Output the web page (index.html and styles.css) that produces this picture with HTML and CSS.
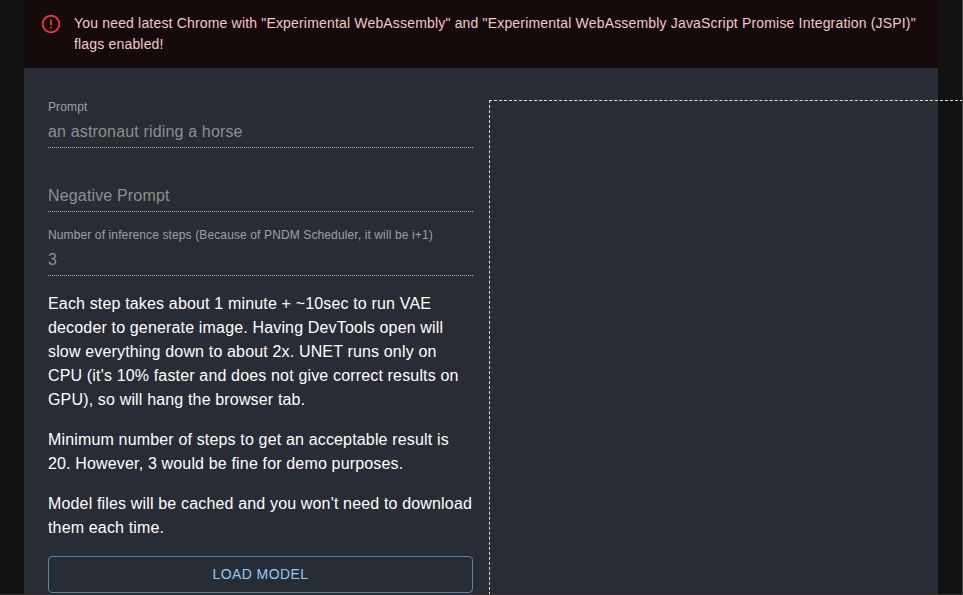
FILE: index.html
```html
<!DOCTYPE html>
<html lang="en">
<head>
    <meta charset="UTF-8">
    <title>Stable Diffusion</title>
    <link rel="stylesheet" href="styles.css">
</head>
<body>
<div class="page">
    <div class="alert">
        <svg class="alert-icon" width="22" height="22" viewBox="0 0 24 24">
            <path fill="#e53935" d="M11 15h2v2h-2zm0-8h2v6h-2zm.99-5C6.47 2 2 6.48 2 12s4.47 10 9.99 10C17.52 22 22 17.52 22 12S17.52 2 11.99 2zM12 20c-4.42 0-8-3.58-8-8s3.58-8 8-8 8 3.58 8 8-3.58 8-8 8z"/>
        </svg>
        <div class="alert-text">You need latest Chrome with "Experimental WebAssembly" and "Experimental WebAssembly JavaScript Promise Integration (JSPI)" flags enabled!</div>
    </div>
    <div class="paper">
        <div class="left">
            <div class="field first">
                <label class="field-label">Prompt</label>
                <div class="field-value">an astronaut riding a horse</div>
            </div>
            <div class="field">
                <label class="field-label"></label>
                <div class="field-value">Negative Prompt</div>
            </div>
            <div class="field">
                <label class="field-label">Number of inference steps (Because of PNDM Scheduler, it will be i+1)</label>
                <div class="field-value">3</div>
            </div>
            <p class="info">Each step takes about 1 minute + ~10sec to run VAE decoder to generate image. Having DevTools open will slow everything down to about 2x. UNET runs only on CPU (it's 10% faster and does not give correct results on GPU), so will hang the browser tab.</p>
            <p class="info">Minimum number of steps to get an acceptable result is 20. However, 3 would be fine for demo purposes.</p>
            <p class="info">Model files will be cached and you won't need to download them each time.</p>
            <button class="load-btn">LOAD MODEL</button>
        </div>
        <div class="right">
            <div class="canvas-box"></div>
        </div>
    </div>
</div>
<div class="edge"></div>
</body>
</html>
```

FILE: styles.css
```css
html, body {
    height: 100%;
}

body {
    margin: 0;
    background: #121212;
    color: #fff;
    font-family: "Liberation Sans", Arial, sans-serif;
    overflow: hidden;
}

.page {
    width: 914px;
    height: 595px;
    margin-left: 24px;
}

.alert {
    display: flex;
    height: 68px;
    box-sizing: border-box;
    padding: 13px 16px 0 16px;
    background: #160b0b;
    color: #f4c7c7;
}

.alert-icon {
    flex: none;
    margin-right: 12px;
}

.alert-text {
    font-size: 14px;
    line-height: 21px;
    letter-spacing: 0.175px;
}

.paper {
    display: flex;
    background: #282c34;
    height: 527px;
}

.left {
    width: 425px;
    margin-left: 24px;
    padding-top: 32px;
    flex: none;
}

.right {
    margin-left: 16px;
    padding-top: 32px;
    flex: none;
}

.field {
    margin-top: 16px;
    border-bottom: 1px dotted #b5b5b5;
}

.field.first {
    margin-top: 0;
}

.field-label {
    display: block;
    height: 14px;
    font-size: 12px;
    line-height: 14px;
    letter-spacing: 0.12px;
    color: #a0a0a0;
}

.field-value {
    height: 33px;
    font-size: 16px;
    line-height: 35px;
    letter-spacing: 0.16px;
    color: #8f8f8f;
}

.info {
    margin: 16px 0;
    font-size: 16px;
    line-height: 24px;
    letter-spacing: 0.16px;
}

.load-btn {
    display: block;
    width: 100%;
    height: 37px;
    margin-top: 16px;
    padding: 0 0 2px;
    background: transparent;
    border: 1px solid #5d84a8;
    border-radius: 4px;
    color: #90caf9;
    font-family: inherit;
    font-size: 14px;
    letter-spacing: 0.4px;
}

.canvas-box {
    width: 474px;
    height: 495px;
    box-sizing: border-box;
    border: 1px dashed #ddd;
    border-bottom: 0;
}

/* thin lighter line on the right and bottom edges of the window */
.edge {
    position: fixed;
    top: 0;
    left: 0;
    right: 0;
    bottom: 0;
    border-right: 1px solid #444;
    border-bottom: 1px solid #333;
    pointer-events: none;
}
```
